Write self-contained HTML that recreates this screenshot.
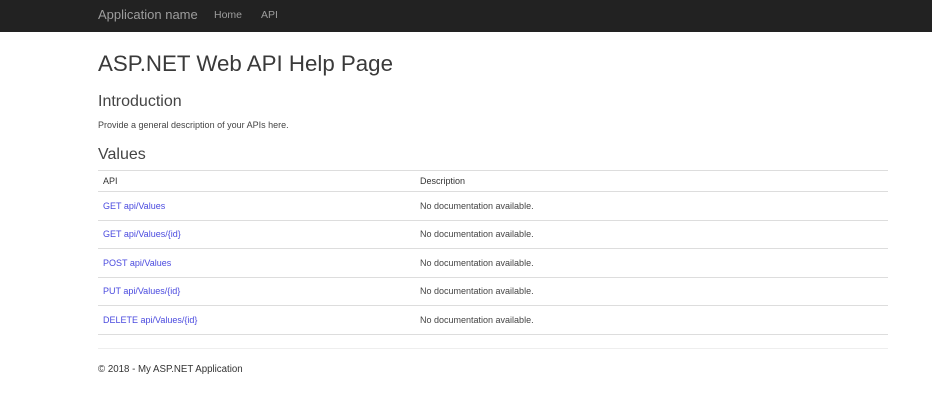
<!DOCTYPE html>
<html><head><style>
body{margin:0;font-family:"Liberation Sans",sans-serif;color:#333;background:#fff;}
.nav{height:32px;background:#222;position:relative;}
.nav span{position:absolute;top:0;line-height:30px;color:#9d9d9d;}
.c{position:absolute;left:98px;width:790px;}
h1{position:absolute;left:98px;top:48px;margin:0;font-weight:normal;font-size:22.3px;line-height:32px;color:#3a3a3a;}
h2{position:absolute;left:98px;margin:0;font-weight:normal;font-size:16px;color:#444}
p{margin:0;font-size:9px;position:absolute;left:98px;color:#444}
table{position:absolute;left:98px;top:170px;width:790px;border-collapse:collapse;font-size:9px;}
td,th{text-align:left;font-weight:normal;padding:0 5px;border-top:1px solid #ddd;}
th{height:20px;border-bottom:1px solid #ddd;color:#333}
td{height:27.5px;color:#444}
td a{color:#4a4adf;}
</style></head><body>
<div class="nav">
<span style="left:98px;font-size:13px;color:#9d9d9d">Application name</span>
<span style="left:214px;font-size:10.5px;line-height:30px">Home</span>
<span style="left:261px;font-size:10.5px;line-height:30px">API</span>
</div>
<h1>ASP.NET Web API Help Page</h1>
<h2 style="top:93px">Introduction</h2>
<p style="top:120px">Provide a general description of your APIs here.</p>
<h2 style="top:146px">Values</h2>
<table>
<tr><th style="width:307px">API</th><th>Description</th></tr>
<tr><td><a>GET api/Values</a></td><td>No documentation available.</td></tr>
<tr><td><a>GET api/Values/{id}</a></td><td>No documentation available.</td></tr>
<tr><td><a>POST api/Values</a></td><td>No documentation available.</td></tr>
<tr><td><a>PUT api/Values/{id}</a></td><td>No documentation available.</td></tr>
<tr><td><a>DELETE api/Values/{id}</a></td><td>No documentation available.</td></tr>
<tr><td style="height:0;padding:0"></td><td style="height:0;padding:0"></td></tr>
</table>
<div class="c" style="top:348px;border-top:1px solid #eee"></div>
<p style="top:364px;font-size:9.7px;color:#333">© 2018 - My ASP.NET Application</p>
</body></html>
